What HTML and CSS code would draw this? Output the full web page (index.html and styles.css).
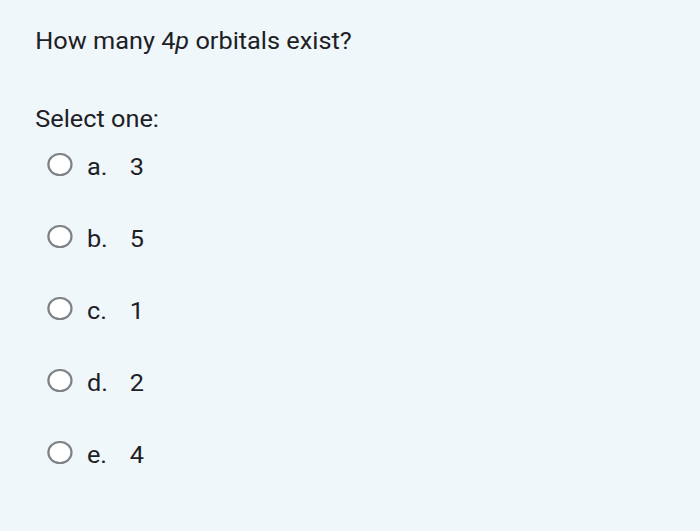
FILE: index.html
```html
<!DOCTYPE html>
<html>
<head>
<meta charset="utf-8">
<link rel="stylesheet" href="styles.css">
</head>
<body>
<div class="quiz">
  <p class="question">How many 4<i>p</i> orbitals exist?</p>
  <p class="prompt">Select one:</p>
  <div class="answers">
    <label class="option"><span class="radio"></span><span class="letter">a.</span><span class="value">3</span></label>
    <label class="option"><span class="radio"></span><span class="letter">b.</span><span class="value">5</span></label>
    <label class="option"><span class="radio"></span><span class="letter">c.</span><span class="value">1</span></label>
    <label class="option"><span class="radio"></span><span class="letter">d.</span><span class="value">2</span></label>
    <label class="option"><span class="radio"></span><span class="letter">e.</span><span class="value">4</span></label>
  </div>
</div>
</body>
</html>
```

FILE: styles.css
```css
html, body {
  margin: 0;
  padding: 0;
  background: #f0f7fb;
  height: 100%;
  overflow: hidden;
}
body {
  font-family: Roboto, "Liberation Sans", sans-serif;
  color: #1d2125;
}
.quiz {
  width: 600px;
  box-sizing: border-box;
  padding: 27px 0 0 32px;
  transform: scaleX(1.1);
  transform-origin: 0 0;
  font-size: 23px;
  line-height: 30px;
}
.question {
  margin: 0;
}
.prompt {
  margin: 48px 0 0 0;
}
.answers {
  display: flex;
  flex-direction: column;
  gap: 42px;
  margin-top: 18px;
  padding-left: 11px;
}
.option {
  display: flex;
  align-items: flex-start;
  height: 30px;
}
.radio {
  width: 18.5px;
  height: 19px;
  border: 2px solid #7d8287;
  border-radius: 50%;
  background: #fff;
  box-sizing: content-box;
  flex: none;
}
.letter {
  margin-left: 13.5px;
  width: 39px;
}
```
